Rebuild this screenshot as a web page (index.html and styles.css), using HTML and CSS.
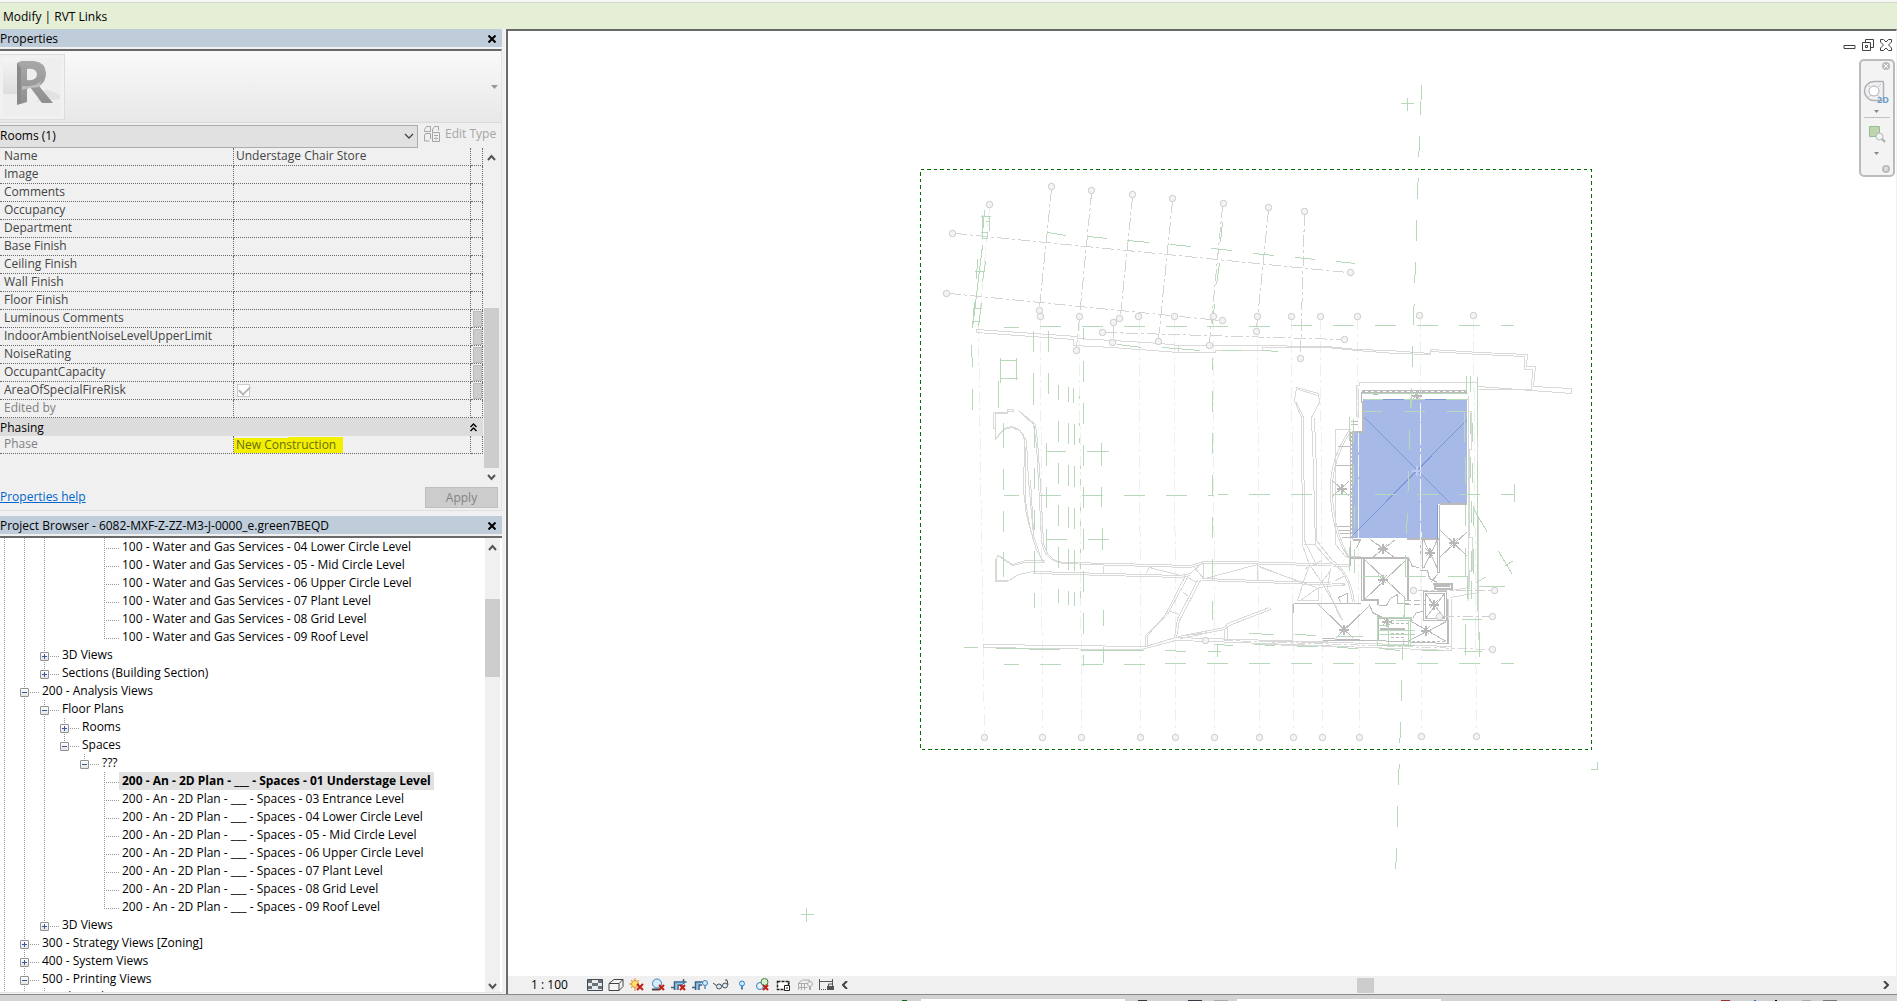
FILE: index.html
```html
<!DOCTYPE html>
<html lang="en">
<head>
    <meta charset="UTF-8">
    <meta name="viewport" content="width=device-width, initial-scale=1.0">
    <title>Modify | RVT Links</title>
    <link rel="stylesheet" href="styles.css">
</head>
<body>

<header class="options-bar">Modify | RVT Links</header>

<div class="workspace">
    <aside class="dock">
        <section class="panel properties">
            <div class="panel-title">
                <h2>Properties</h2>
                <button class="close-btn" aria-label="Close Properties">
                    <svg width="8" height="8" viewBox="0 0 8 8"><path d="M0.5 0.5l7 7M7.5 0.5l-7 7" stroke="#000" stroke-width="2"/></svg>
                </button>
            </div>
            <div class="properties-body">
                <div class="type-selector">
                    <div class="type-thumb">
                        <svg width="60" height="60" viewBox="0 0 60 60">
                            <defs>
                                <linearGradient id="rg" x1="0" y1="0" x2="0" y2="1"><stop offset="0" stop-color="#a8a8a8"/><stop offset="1" stop-color="#8e8e8e"/></linearGradient>
                                <linearGradient id="bg" x1="0" y1="0" x2="0" y2="1"><stop offset="0" stop-color="#f4f4f4"/><stop offset="1" stop-color="#dedede"/></linearGradient>
                            </defs>
                            <path d="M1 1h58v58h-58z" fill="#eee"/>
                            <path d="M1 1h18v36h-18z" fill="url(#bg)"/>
                            <path d="M34 45l24-3v-4l-14-6z" fill="#e2e2e2"/>
                            <path fill-rule="evenodd" d="M15 6l4-2h13q11 1 12 12q0 9-7 13l14 17h-11l-12-16l-3 2v13l-10 3zM25 12v11q10 1 10-6q-1-6-10-5z" fill="url(#rg)"/>
                            <path d="M15 6l4 5v35l-4 1z" fill="#8a8a8a"/>
                            <path d="M20 29q14 1 19-5l-1 6l-10 1l-8 2z" fill="#bdbdbd"/>
                        </svg>
                    </div>
                    <svg class="drop-arrow" width="7" height="4" viewBox="0 0 7 4"><path d="M0 0h7l-3.500 4z" fill="#999"/></svg>
                </div>
                <div class="filter-row">
                    <div class="filter">
                        <select aria-label="Element filter"><option>Rooms (1)</option></select>
                        <svg width="10" height="6" viewBox="0 0 10 6"><path d="M1 1l4 4l4-4" fill="none" stroke="#444" stroke-width="1.300"/></svg>
                    </div>
                    <button class="edit-type" disabled>
                        <svg width="17" height="17" viewBox="0 0 17 17" fill="none" stroke="#a5a5a5">
                            <path d="M.5 3.500l2-3h4v5h-6zM8.500 3.500l2-3h4v4M8.500 3v3M.5 9.500l1-2h5v2M.5 9v6h5M6.500 8v5"/>
                            <path d="M8.500 6.500h7v9h-7zM10 9.500h4M10 12.500h1M13 12.500h1M12 11v3"/>
                        </svg>
                        Edit Type
                    </button>
                </div>
                <div class="grid-area">
                    <table class="params">
                        <colgroup><col class="col-name"><col><col class="col-btn"></colgroup>
                        <tbody>
                            <tr><th>Name</th><td>Understage Chair Store</td><td></td></tr>
                            <tr><th>Image</th><td></td><td></td></tr>
                            <tr><th>Comments</th><td></td><td></td></tr>
                            <tr><th>Occupancy</th><td></td><td></td></tr>
                            <tr><th>Department</th><td></td><td></td></tr>
                            <tr><th>Base Finish</th><td></td><td></td></tr>
                            <tr><th>Ceiling Finish</th><td></td><td></td></tr>
                            <tr><th>Wall Finish</th><td></td><td></td></tr>
                            <tr><th>Floor Finish</th><td></td><td></td></tr>
                            <tr><th>Luminous Comments</th><td></td><td><button class="assoc" aria-label="Associate Luminous Comments"></button></td></tr>
                            <tr><th>IndoorAmbientNoiseLevelUpperLimit</th><td></td><td><button class="assoc" aria-label="Associate noise limit"></button></td></tr>
                            <tr><th>NoiseRating</th><td></td><td><button class="assoc" aria-label="Associate NoiseRating"></button></td></tr>
                            <tr><th>OccupantCapacity</th><td></td><td><button class="assoc" aria-label="Associate OccupantCapacity"></button></td></tr>
                            <tr><th><label for="fire-risk">AreaOfSpecialFireRisk</label></th><td><input type="checkbox" id="fire-risk" checked disabled></td><td><button class="assoc" aria-label="Associate AreaOfSpecialFireRisk"></button></td></tr>
                            <tr class="read-only"><th>Edited by</th><td></td><td></td></tr>
                            <tr class="group">
                                <th colspan="3">
                                    <div class="group-head">Phasing
                                        <svg width="7" height="9" viewBox="0 0 7 9"><path d="M.5 4l3-3l3 3M.5 8l3-3l3 3" fill="none" stroke="#000" stroke-width="1.400"/></svg>
                                    </div>
                                </th>
                            </tr>
                            <tr class="read-only"><th>Phase</th><td class="marked"><mark>New Construction</mark></td><td></td></tr>
                        </tbody>
                    </table>
                    <div class="scrollbar props-scroll">
                        <svg width="9" height="7" viewBox="0 0 9 7"><path d="M1 6l3.500-4l3.500 4" fill="none" stroke="#555" stroke-width="2"/></svg>
                        <div class="thumb"></div>
                        <svg width="9" height="7" viewBox="0 0 9 7"><path d="M1 1l3.500 4l3.500-4" fill="none" stroke="#555" stroke-width="2"/></svg>
                    </div>
                </div>
                <div class="panel-footer">
                    <a href="#">Properties help</a>
                    <button class="apply-btn" disabled>Apply</button>
                </div>
            </div>
        </section>

        <section class="panel browser">
            <div class="panel-title">
                <h2>Project Browser - 6082-MXF-Z-ZZ-M3-J-0000_e.green7BEQD</h2>
                <button class="close-btn" aria-label="Close Project Browser">
                    <svg width="8" height="8" viewBox="0 0 8 8"><path d="M0.5 0.5l7 7M7.5 0.5l-7 7" stroke="#000" stroke-width="2"/></svg>
                </button>
            </div>
            <div class="browser-body">
                <ul class="tree">
                    <li>
                        <ul>
                            <li>
                                <ul>
                                    <li>
                                        <ul>
                                            <li class="bare">
                                                <ul>
                                                    <li class="bare">
                                                        <ul>
                                                            <li class="leaf"><span>100 - Water and Gas Services - 04 Lower Circle Level</span></li>
                                                            <li class="leaf"><span>100 - Water and Gas Services - 05 - Mid Circle Level</span></li>
                                                            <li class="leaf"><span>100 - Water and Gas Services - 06 Upper Circle Level</span></li>
                                                            <li class="leaf"><span>100 - Water and Gas Services - 07 Plant Level</span></li>
                                                            <li class="leaf"><span>100 - Water and Gas Services - 08 Grid Level</span></li>
                                                            <li class="leaf last"><span>100 - Water and Gas Services - 09 Roof Level</span></li>
                                                        </ul>
                                                    </li>
                                                </ul>
                                            </li>
                                        </ul>
                                    </li>
                                    <li><div class="node"><button class="plus" aria-label="Expand"></button><span>3D Views</span></div></li>
                                    <li class="last"><div class="node"><button class="plus" aria-label="Expand"></button><span>Sections (Building Section)</span></div></li>
                                </ul>
                            </li>
                            <li>
                                <div class="node"><button class="minus" aria-label="Collapse"></button><span>200 - Analysis Views</span></div>
                                <ul>
                                    <li>
                                        <div class="node"><button class="minus" aria-label="Collapse"></button><span>Floor Plans</span></div>
                                        <ul>
                                            <li><div class="node"><button class="plus" aria-label="Expand"></button><span>Rooms</span></div></li>
                                            <li class="last">
                                                <div class="node"><button class="minus" aria-label="Collapse"></button><span>Spaces</span></div>
                                                <ul>
                                                    <li class="last">
                                                        <div class="node"><button class="minus" aria-label="Collapse"></button><span>???</span></div>
                                                        <ul>
                                                            <li class="leaf active"><span>200 - An - 2D Plan - ___ - Spaces - 01 Understage Level</span></li>
                                                            <li class="leaf"><span>200 - An - 2D Plan - ___ - Spaces - 03 Entrance Level</span></li>
                                                            <li class="leaf"><span>200 - An - 2D Plan - ___ - Spaces - 04 Lower Circle Level</span></li>
                                                            <li class="leaf"><span>200 - An - 2D Plan - ___ - Spaces - 05 - Mid Circle Level</span></li>
                                                            <li class="leaf"><span>200 - An - 2D Plan - ___ - Spaces - 06 Upper Circle Level</span></li>
                                                            <li class="leaf"><span>200 - An - 2D Plan - ___ - Spaces - 07 Plant Level</span></li>
                                                            <li class="leaf"><span>200 - An - 2D Plan - ___ - Spaces - 08 Grid Level</span></li>
                                                            <li class="leaf last"><span>200 - An - 2D Plan - ___ - Spaces - 09 Roof Level</span></li>
                                                        </ul>
                                                    </li>
                                                </ul>
                                            </li>
                                        </ul>
                                    </li>
                                    <li class="last"><div class="node"><button class="plus" aria-label="Expand"></button><span>3D Views</span></div></li>
                                </ul>
                            </li>
                            <li><div class="node"><button class="plus" aria-label="Expand"></button><span>300 - Strategy Views [Zoning]</span></div></li>
                            <li><div class="node"><button class="plus" aria-label="Expand"></button><span>400 - System Views</span></div></li>
                            <li>
                                <div class="node"><button class="minus" aria-label="Collapse"></button><span>500 - Printing Views</span></div>
                                <ul>
                                    <li><div class="node"><button class="minus" aria-label="Collapse"></button><span>Floor Plans</span></div></li>
                                </ul>
                            </li>
                        </ul>
                    </li>
                </ul>
                <div class="scrollbar tree-scroll">
                    <svg width="9" height="7" viewBox="0 0 9 7"><path d="M1 6l3.500-4l3.500 4" fill="none" stroke="#555" stroke-width="2"/></svg>
                    <div class="thumb"></div>
                    <svg width="9" height="7" viewBox="0 0 9 7"><path d="M1 1l3.500 4l3.500-4" fill="none" stroke="#555" stroke-width="2"/></svg>
                </div>
            </div>
        </section>
    </aside>

    <main class="view">
        <div class="canvas">
            <svg class="plan" viewBox="508 31 1388 945" preserveAspectRatio="xMinYMin slice">
                <defs>
                    <g id="b"><circle r="3.200" fill="#f4f4f4" stroke="#cbcbcb" shape-rendering="auto"/></g>
                    <g id="s"><path d="M-4-4l8 8M4-4l-8 8" stroke="#bbb"/><path d="M-5 0h10M0-5v10" stroke="#b8b8b8" stroke-width="2"/></g>
                </defs>
                <path d="M1363 399H1467V504H1438V538H1352V431H1363Z" fill="#a7b9e7" shape-rendering="crispEdges"/>
                <g transform="translate(.5 .5)" fill="none" shape-rendering="crispEdges">

                    <!-- long vertical grids -->
                    <g stroke="#efefef" stroke-dasharray="12 4 3 4">
                        <path d="M989 208L978 330L984 735M1040 318L1042 735M1079 318L1081 735M1139 318L1140 735M1174 318L1175 735M1213 318L1214 735M1257 318L1259 735M1291 318L1293 735M1320 318L1322 735M1357 318L1359 735M1420 318L1421 735M1473 318L1476 735"/>
                    </g>

                    <!-- survey grid -->
                    <g stroke="#d3d3d3" stroke-dasharray="12 3 3 3">
                        <path d="M955 233L1347 272M949 293L1219 320M1105 332L1341 339"/>
                        <path d="M1051 189L1039 307M1091 193L1076 347M1132 197L1120 315M1172 201L1158 338M1222 206L1209 342M1268 210L1256 328M1304 214L1300 355M1113 325V339"/>
                    </g>

                    <!-- boundary walls -->
                    <g stroke="#d9d9d9">
                        <path d="M976 332V329L1077 336V338L1112 340L1160 343L1178 345H1245L1327 346L1356 349L1389 350L1430 353V349L1480 352L1527 354L1526 366H1535L1533 386L1571 388V393L1478 386"/>
                        <path d="M976 332L1073 339V345L1112 347L1178 352H1215V350H1262V347L1327 347L1356 350L1395 353L1430 354V351L1480 354L1524 356V369H1532L1531 389L1478 389M1178 345V352"/>
                        <path d="M1007 412H993V428H995V439L1003 429L1011 427L1019 430L1026 440L1028 480L1033 535L1042 562"/>
                        <path d="M1007 413H995V430M1007 412V409H1013V411H1007M997 435Q1011 418 1023 434L1025 450V500L1029 525L1036 550L1044 562M1024 445L1023 490L1026 515L1033 540M1030 480L1033 530"/>
                        <path d="M1018 410L1035 424L1037 440L1041 500L1043 543Q1048 562 1065 562L1116 563L1190 565L1203 561H1240L1350 564"/>
                        <path d="M1020 412L1033 424L1036 445L1039 500L1041 540Q1044 562 1065 563L1116 565L1190 567L1203 563H1240L1350 566"/>
                        <path d="M995 558L998 555L1012 564L1025 560H1044M995 558V581H1007L1018 574L1033 571L1180 575L1190 573L1203 561M996 557V580H1007M1033 573L1180 577L1190 575M997 555L1012 565L1025 562H1044"/>
                        <path d="M1103 565V573M1149 566L1146 573M1149 567L1180 575M1203 563V578M1205 578L1257 564V580M1257 565L1300 582M1202 578L1345 583M1202 580L1345 585M1194 567L1203 578M1184 575L1196 582"/>
                        <path d="M1187 577L1167 614L1145 635V646M1184 577L1165 614L1147 635V646M1200 580L1179 620L1176 637M1197 580L1177 618L1174 637M1183 592L1188 596M1170 611L1179 614"/>
                        <path d="M983 644V647L1110 649H1141L1175 640L1210 641L1345 646M983 644L1145 646L1175 637L1205 638L1345 642"/>
                        <path d="M1178 636L1224 627L1227 623L1269 607M1180 638L1224 629L1229 625L1270 609V607M1227 625V640M1224 628V640M1185 635L1208 632"/>
                        <path d="M1296 387L1318 393L1319 402L1311 417L1313 470L1315 545L1330 562Q1348 570 1352 602M1296 387L1294 400L1301 417L1302 545L1309 564L1320 580L1335 605L1342 620"/>
                        <path d="M1298 389L1317 395M1296 402L1303 417L1304 540L1316 565M1314 418L1316 470V540L1332 560Q1350 572 1354 602M1303 544H1315M1309 565L1304 578L1297 600H1318V587L1346 584M1318 587L1300 600M1318 587V600M1318 586L1330 570"/>
                        <path d="M1330 568L1327 588L1340 618M1322 560L1305 568M1316 587L1260 567M1335 580L1345 575"/>
                        <path d="M1350 429H1335V544L1345 556H1360M1348 431Q1329 460 1330 490Q1330 530 1348 558M1350 431Q1331 462 1332 490Q1332 528 1350 560"/>
                        <path d="M1356 416V385H1359V382H1477V385M1358 417V388M1467 411H1471V449H1469V537H1472V570H1469V588M1477 385L1478 640M1468 395V600"/>
                        <path d="M1292 602V643M1260 641L1340 642L1450 646H1451V598M1260 644L1340 646L1451 650V646M1448 598V643M1450 597L1478 592M1450 590L1469 587"/>
                        <path d="M1224 640L1489 649" stroke-dasharray="9 3 3 3"/>
                    </g>

                    <!-- building walls and rooms -->
                    <g stroke="#bbb">
                        <path d="M1361 391H1466" stroke-width="3"/>
                        <path d="M1364 391H1466" stroke="#fff" stroke-dasharray="3 3"/>
                        <path d="M1361 391V402M1372 394H1377M1350 421H1357M1350 424H1357M1350 431V538M1352 431V538" />
                        <path d="M1351 431V538" stroke-dasharray="2 2"/>
                        <path d="M1362 400V431H1352M1439 503H1466M1352 539H1360M1406 538H1438" stroke-width="2"/>
                        <path d="M1437 504V572H1439V504M1420 539V570H1427M1422 539V568"/>
                        <path d="M1350 557H1407M1363 558V599H1377V604M1407 557V600" stroke-width="2"/>
                        <path d="M1350 557H1407M1361 558V600H1376"/>
                        <path d="M1364 559L1406 599M1406 559L1364 599M1370 539L1394 557M1395 539L1372 557M1423 539L1437 568M1437 539L1423 568M1440 530L1467 556M1467 531L1440 556"/>
                        <path d="M1423 591H1446V620H1423ZM1425 593H1444V618H1425ZM1425 593L1444 618M1444 593L1425 618M1424 620H1448V643M1409 620L1446 641M1446 621L1407 641M1447 598V643"/>
                        <path d="M1432 583H1451V588H1434V585H1449" stroke-width="2"/>
                        <path d="M1377 617H1410V620M1377 614V640M1379 628H1404" stroke-width="2"/>
                        <path d="M1318 604L1353 638M1369 605L1335 638M1293 603H1360M1322 638L1448 643M1322 640H1377M1293 603V612M1369 604L1372 612L1382 617"/>
                        <path d="M1337 446H1350M1334 465H1350M1332 480L1349 496M1349 480L1332 496M1337 526H1350M1338 530H1350M1339 533H1350M1341 537H1350M1350 540V565"/>
                        <path d="M1360 539L1356 548M1408 557L1412 566L1419 567M1427 570L1429 578L1437 582M1430 582L1437 574M1378 605H1386L1390 598L1397 594V603H1408M1424 611L1416 612L1412 618M1347 593V602M1340 602L1338 597L1347 593" />
                        <path d="M1390 620H1410M1390 623H1410M1390 633H1404M1390 637H1404M1386 641H1447" stroke-dasharray="3 2"/>
                        <path d="M1404 600H1424M1404 604H1424" stroke-dasharray="6 3"/>
                    </g>
                    <path d="M1364 417L1450 503M1466 420L1353 534M1382 399H1403M1424 399H1445M1437 504V538" stroke="#7d97d8"/>
                    <path d="M1411 470H1421M1416 465V475" stroke="#bccaf0" stroke-width="2"/>
                    <path d="M1420 403V595M1358 435V538" stroke="#f3f3f3" stroke-dasharray="16 3 3 3"/>
                    <use href="#s" x="1416" y="395"/><use href="#s" x="1341" y="488"/><use href="#s" x="1382" y="548"/><use href="#s" x="1429" y="552"/>
                    <use href="#s" x="1453" y="542"/><use href="#s" x="1382" y="579"/><use href="#s" x="1433" y="604"/><use href="#s" x="1425" y="630"/>
                    <use href="#s" x="1343" y="629"/><use href="#s" x="1386" y="621"/>

                    <g stroke="#cfcfcf" stroke-dasharray="10 3 3 3"><path d="M1417 590H1491M1443 616H1489"/></g>

                    <!-- reference planes -->
                    <g stroke="#b7d9b9">
                        <path d="M1419 136L1395 877" stroke-dasharray="21 20.860"/>
                        <path d="M1421 84V99M1420 100V114M1400 103H1413M1407 97V110M800 914H813M806 907V921M1590 769H1597V761"/>
                        <path d="M1003 327H1018M1003 495H1018M1003 664H1018M1039 326H1213M1039 495H1213M1039 664H1144" stroke-dasharray="21 21"/>
                        <path d="M1217 494H1227M1248 494H1513M1164 663H1513M1206 326H1269M1290 325H1513" stroke-dasharray="21 21"/>
                        <path d="M1514 483V501M1045 451H1065M1086 451H1108M1045 539H1066M1087 539H1108M963 647H977M1000 357V382M1016 357V379M999 360H1016M1000 378H1017"/>
                        <path d="M1033 330V351M1048 330V351M1033 372V404M1048 372V393M998 380V407M971 345L972 367M972 388V409M1003 422V447M1003 468V489M1003 510V531M1003 551V576"/>
                        <path d="M1034 425V447M1034 467V488M1034 509V529M1034 550V573M1034 592V607M1046 442V465M1046 486V507M1046 528V550M1101 442V465M1101 486V506M1102 527V549M1103 609V625M1103 646V662"/>
                        <path d="M1083 327V665M1212 357V619" stroke-dasharray="21 21" stroke-dashoffset="9"/>
                        <path d="M1058 384V399M1058 420V602M1068 386V401M1068 422V604M1073 387V402M1074 423V605" stroke-dasharray="21 21"/>
                        <path d="M1079 395V398M1079 422V425M1079 437V442M1080 465V468M1080 478V484M1080 506V510M1080 520V525M1080 548V552M1080 562V568M1080 590V597"/>
                        <path d="M984 210L982 234M989 216V230M982 245L972 328M980 216H990M985 221H989M982 214V238H987V232H980M977 259L976 279M985 261L982 281M974 271H984M974 302L972 328M981 303L978 326M972 308H981M971 321H979"/>
                        <path d="M1047 232L1066 235M1088 236L1107 238M1127 240L1149 242M1170 244L1191 246M1211 248L1232 250M1253 253L1274 255M1295 257L1315 259M1336 261L1355 263M1222 222L1220 242M1219 263L1216 284M1214 304L1212 324M1117 344L1141 347M1162 347L1200 350M1221 350H1241M1262 350L1278 351"/>
                        <path d="M996 648L1060 649M1080 650H1143M1165 650L1186 651M1207 651H1220M1217 643V656M1215 644L1233 645M1249 633L1274 634M1254 644L1275 645M1296 646H1317M1295 634L1316 635M1337 636H1362M1337 647L1358 648M1379 648L1400 650M1421 650H1442"/>
                        <path d="M1363 399H1382M1403 399H1424M1445 399H1467M1361 393H1467M1362 411H1381M1403 411H1424M1445 411H1466M1411 387V406M1362 576H1383M1404 576H1425M1447 576H1467"/>
                        <path d="M1349 416V440M1353 418V442M1353 464V484M1354 505V526M1349 546V570M1354 548V572"/>
                        <path d="M1466 375V391M1470 375V391M1477 376V435M1464 412V441M1470 412V433M1472 422V441M1465 456V483M1470 456V477M1472 462V482M1465 504V525M1471 500V522M1473 505V525M1465 547V575M1471 550V571M1477 460V610M1467 575V598M1471 580V598M1473 548V573"/>
                        <path d="M1473 508L1487 532M1498 551L1512 574M1505 565L1513 560M1476 582L1486 576M1478 586H1504M1461 619H1481M1465 623V654M1479 631V656M1463 651H1481"/>
                        <path d="M1377 617H1410V645H1377ZM1388 618V645M1378 625H1388V617M1377 630H1414M1396 620H1412M1377 634H1414M1404 595V616M1402 645V658M1408 620V646M1378 645H1414"/>
                    </g>

                    <!-- grid heads -->
                    <g>
                        <use href="#b" x="989" y="204"/><use href="#b" x="1051" y="186"/><use href="#b" x="1091" y="190"/><use href="#b" x="1132" y="194"/><use href="#b" x="1172" y="198"/><use href="#b" x="1223" y="203"/><use href="#b" x="1268" y="207"/><use href="#b" x="1304" y="211"/>
                        <use href="#b" x="952" y="233"/><use href="#b" x="946" y="293"/><use href="#b" x="1350" y="272"/><use href="#b" x="1222" y="320"/><use href="#b" x="1102" y="332"/><use href="#b" x="1344" y="339"/>
                        <use href="#b" x="1039" y="310"/><use href="#b" x="1076" y="350"/><use href="#b" x="1119" y="318"/><use href="#b" x="1113" y="322"/><use href="#b" x="1112" y="342"/><use href="#b" x="1158" y="341"/><use href="#b" x="1209" y="345"/><use href="#b" x="1256" y="331"/><use href="#b" x="1300" y="358"/>
                        <use href="#b" x="1040" y="316"/><use href="#b" x="1079" y="316"/><use href="#b" x="1138" y="316"/><use href="#b" x="1174" y="316"/><use href="#b" x="1213" y="316"/><use href="#b" x="1257" y="316"/><use href="#b" x="1291" y="316"/><use href="#b" x="1320" y="316"/><use href="#b" x="1357" y="316"/><use href="#b" x="1419" y="315"/><use href="#b" x="1473" y="315"/>
                        <use href="#b" x="984" y="737"/><use href="#b" x="1042" y="737"/><use href="#b" x="1081" y="737"/><use href="#b" x="1140" y="737"/><use href="#b" x="1175" y="737"/><use href="#b" x="1214" y="737"/><use href="#b" x="1259" y="737"/><use href="#b" x="1293" y="737"/><use href="#b" x="1322" y="737"/><use href="#b" x="1359" y="737"/><use href="#b" x="1421" y="736"/><use href="#b" x="1476" y="736"/>
                        <use href="#b" x="1413" y="590"/><use href="#b" x="1494" y="590"/><use href="#b" x="1439" y="616"/><use href="#b" x="1492" y="616"/><use href="#b" x="1492" y="649"/><use href="#b" x="1205" y="640"/>
                    </g>

                    <!-- selected link extents -->
                    <path d="M920 169H1591V749H920Z" stroke="#007000" stroke-dasharray="3.500 3"/>
                </g>
            </svg>
            <div class="view-tools">
                <div class="window-btns">
                    <button aria-label="Minimize"><svg width="13" height="12" viewBox="0 0 13 12"><path d="M1 6.500h11v3h-11z" fill="#fff" stroke="#444"/></svg></button>
                    <button aria-label="Restore"><svg width="12" height="12" viewBox="0 0 12 12" fill="#fff" stroke="#444"><path d="M3.500 .5h8v8h-8z"/><path d="M.5 3.500h8v8h-8z"/><path d="M3.500 6.500h2v2h-2z"/></svg></button>
                    <button aria-label="Close"><svg width="12" height="12" viewBox="0 0 12 12"><path d="M.5 .5h3l2.500 2.500l2.500-2.500h3v2.500l-3 3l3 3v2.500h-3l-2.500-2.500l-2.500 2.500h-3v-2.500l3-3l-3-3z" fill="#fff" stroke="#444"/></svg></button>
                </div>
                <nav class="nav-bar">
                    <svg width="32" height="114" viewBox="0 0 32 114">
                        <circle cx="25" cy="5" r="4" fill="#bbb"/><path d="M23 3l4 4M27 3l-4 4" stroke="#fff"/>
                        <path d="M22 20.500H13A9 9 0 0 0 13 39.500H22.500V22z" fill="#f0f1f4" stroke="#b0b0b5" stroke-width="1.500"/>
                        <circle cx="13" cy="30" r="5" fill="#fff" stroke="#b0b0b5"/><path d="M6 37l4-3M20 37l-4-3M6 23l3 3M20 23l-3 3" stroke="#c5c5c8"/>
                        <text x="16" y="42" class="nav-2d">2D</text>
                        <path d="M13 49h5l-2.500 3zM13 91h5l-2.500 3z" fill="#888"/>
                        <path d="M3 56.500h26" stroke="#c0c0c0"/>
                        <path d="M8.500 65.500h10v10h-10z" fill="#bed5af" stroke="#90c090"/>
                        <circle cx="18.500" cy="75.500" r="3.500" fill="#f2f4f6" stroke="#b2b6ba"/><path d="M21 78l3 3" stroke="#aaa" stroke-width="2"/>
                        <circle cx="25" cy="108" r="4" fill="#bbb"/><path d="M23 107h4M23.500 109h3" stroke="#fff"/>
                    </svg>
                </nav>
            </div>
        </div>

        <div class="view-bar">
            <button class="scale">1 : 100</button>
            <div class="view-icons">
                <svg viewBox="0 0 16 14"><path d="M.5 1.500h15v11h-15z" fill="#e8eaec" stroke="#444b52"/><path d="M1 2h4v3h-4zM11 2h4v3h-4zM5 5h6v3h-6zM1 8h4v3h-4zM11 8h4v3h-4z" fill="#68727a"/></svg>
                <svg viewBox="0 0 16 14"><path d="M1 5.500l5-4h9l-4 4v7h-10zM1 5.500h10M15 1.500v7l-4 4" fill="#f5f5f5" stroke="#444"/></svg>
                <svg viewBox="0 0 16 14"><circle cx="6" cy="6" r="3.500" fill="#ffe27a" stroke="#e09020"/><path d="M6 0v2M6 10v3M0 6h2M2 2l1 1M10 2l-1 1M2 10l1-1" stroke="#e09020"/><path d="M8 6l6 6M14 6l-6 6" stroke="#c02018" stroke-width="2"/></svg>
                <svg viewBox="0 0 16 14"><circle cx="7" cy="5.500" r="4.500" fill="#d6ecfa" stroke="#3a7fc0"/><path d="M2 11.500h7" stroke="#444" stroke-width="2"/><path d="M9 7l5 5M14 7l-5 5" stroke="#c02018" stroke-width="2"/></svg>
                <svg viewBox="0 0 16 14"><path d="M0 9.500h4M3.500 12v-8h12M7 12v-5h5M12.500 1v5" fill="none" stroke="#3d5f80" stroke-width="1.500"/><path d="M5 12v-7h9" fill="none" stroke="#3a9ae0"/><path d="M9 7l5 5M14 7l-5 5" stroke="#c02018" stroke-width="2"/></svg>
                <svg viewBox="0 0 16 14"><path d="M0 9.500h4M3.500 12v-8h7M7 12v-5h3" fill="none" stroke="#3d5f80" stroke-width="1.500"/><path d="M5 12v-7h4" fill="none" stroke="#3a9ae0"/><circle cx="13" cy="5" r="2.500" fill="#d6ecfa" stroke="#3a7fc0"/><path d="M12 8h2v3h-2z" fill="#7da5c5"/></svg>
                <svg viewBox="0 0 16 14"><path d="M0 5l4 3M6 7l4 1M12 2h2l1 5" stroke="#444" fill="none"/><circle cx="6" cy="8.500" r="2.500" fill="#dcebf2" stroke="#4a5258"/><circle cx="12" cy="7.500" r="2.500" fill="#dcebf2" stroke="#4a5258"/></svg>
                <svg viewBox="0 0 16 14"><circle cx="8" cy="5.500" r="2.500" fill="#cfeaff" stroke="#2585d0"/><path d="M7 8h2v3.500h-2z" fill="#4b7eaa"/></svg>
                <svg viewBox="0 0 16 14"><circle cx="5" cy="8" r="3.500" fill="#e6f3fa" stroke="#3a7fc0"/><circle cx="9.500" cy="4" r="3.500" fill="#d9efd0" stroke="#388040"/><path d="M8 7l5 5M13 7l-5 5" stroke="#c02018" stroke-width="2"/></svg>
                <svg viewBox="0 0 16 14"><path d="M1.500 3.500h11v8h-11z" fill="#fff" stroke="#222" stroke-width="1.500" stroke-dasharray="3 1"/><path d="M8.500 7.500h5v5h-5z" fill="#fff" stroke="#222"/><path d="M13 3v3M10 10h2" stroke="#222"/></svg>
                <svg viewBox="0 0 16 14"><path d="M1.500 5.500h9M1.500 9.500h9M1.500 5v7M4.500 5v7M7.500 5v7M1.500 5l4-3h7v3" fill="none" stroke="#aaa"/><circle cx="13" cy="6" r="2.500" fill="#eee" stroke="#aaa"/><path d="M13 9v3" stroke="#aaa" stroke-width="2"/></svg>
                <svg viewBox="0 0 16 14"><path d="M1.500 1v11M14.500 1v5M1.500 3.500h13" fill="none" stroke="#555"/><path d="M3 11.500h5" stroke="#555" stroke-dasharray="1 1"/><path d="M9 8h7v4h-7z" fill="#555"/><path d="M10.500 8v-2h4v2" fill="none" stroke="#555"/></svg>
            </div>
            <div class="h-scroll">
                <svg width="6" height="8" viewBox="0 0 6 8"><path d="M5 0l-4 4l4 4" fill="none" stroke="#444" stroke-width="2"/></svg>
                <div class="h-thumb"></div>
                <svg width="6" height="8" viewBox="0 0 6 8"><path d="M1 0l4 4l-4 4" fill="none" stroke="#444" stroke-width="2"/></svg>
            </div>
        </div>
    </main>
</div>

<footer class="status-bar">
    <i class="bit green"></i>
    <i class="field"></i>
    <i class="bit dark"></i>
    <i class="bit dark wide"></i>
    <i class="bit grey wide"></i>
    <i class="field second"></i>
    <i class="bit red"></i>
    <i class="bit blue"></i>
    <i class="bit black"></i>
    <i class="bit grey"></i>
    <i class="bit slate wide"></i>
</footer>

</body>
</html>
```

FILE: styles.css
```css
* {
    box-sizing: border-box;
}
body {
    margin: 0;
    height: 100vh;
    display: flex;
    flex-direction: column;
    overflow: hidden;
    background-color: #f0f0f0;
    font-family: "Open Sans", "Noto Sans", sans-serif;
    font-size: 12px;
    line-height: 18px;
    color: #000;
}
button, select, input {
    font: inherit;
    margin: 0;
}
button {
    padding: 0;
    border: none;
    background: none;
}
svg {
    display: block;
    flex: none;
}
.options-bar {
    height: 29px;
    flex: none;
    padding: 6px 3px 0;
    border-top: 2px solid #f7f7f4;
    box-shadow: inset 0 1px 0 #d6d8d2;
    background-color: #e4efd6;
}
.workspace {
    flex: 1;
    min-height: 0;
    display: flex;
}

/* docked panels */
.dock {
    width: 506px;
    flex: none;
    display: flex;
    flex-direction: column;
    padding-right: 3px;
    border-right: 1px solid #f8f8f8;
}
.panel {
    display: flex;
    flex-direction: column;
}
.panel-title {
    height: 18px;
    margin-bottom: 2px;
    flex: none;
    display: flex;
    justify-content: space-between;
    align-items: center;
    padding: 2px 6px 0 0;
    background-color: #bfcddb;
}
.panel-title h2 {
    margin: 0;
    font-size: 12px;
    font-weight: normal;
    white-space: nowrap;
}
.properties-body {
    display: flex;
    flex-direction: column;
    border-top: 2px solid #696969;
    border-right: 1px solid #e3e3e3;
    border-bottom: 1px solid #e0e0e0;
    margin-bottom: 5px;
}
.type-selector {
    height: 72px;
    display: flex;
    justify-content: space-between;
    align-items: center;
    padding-right: 3px;
    background: linear-gradient(#f9f9f9, #e8e8e8);
    border-bottom: 1px solid #d9d9d9;
}
.type-thumb {
    padding: 2px;
    border: 1px solid #ddd;
    border-left: none;
    background-color: #f1f1f1;
}
.filter-row {
    height: 25px;
    display: flex;
    padding-top: 1px;
    gap: 6px;
}
.filter {
    width: 418px;
    display: grid;
    align-items: center;
}
.filter select, .filter svg {
    grid-area: 1 / 1;
}
.filter select {
    appearance: none;
    width: 100%;
    height: 23px;
    padding: 0;
    border: 1px solid #adadad;
    border-left: none;
    border-radius: 0;
    background-color: #e1e1e1;
    color: #000;
}
.filter svg {
    justify-self: end;
    margin-right: 4px;
    pointer-events: none;
}
.edit-type {
    display: flex;
    align-items: center;
    gap: 4px;
    height: 20px;
    color: #a5a5a5;
    white-space: nowrap;
}
.grid-area {
    display: flex;
    height: 337px;
    align-items: flex-start;
    padding-right: 2px;
}
.params {
    flex: 1;
    table-layout: fixed;
    width: 100%;
    border-collapse: separate;
    border-spacing: 0;
    color: #444;
}
.col-name {
    width: 234px;
}
.col-btn {
    width: 12px;
}
.params th, .params td {
    height: 18px;
    padding: 0 0 2px 2px;
    line-height: 15px;
    font-weight: normal;
    text-align: left;
    white-space: nowrap;
    border-right: 1px dotted #6a6a6a;
    border-bottom: 1px dotted #6a6a6a;
}
.params th {
    padding-left: 4px;
}
.params td:last-child {
    padding-bottom: 0;
}
.params .read-only {
    color: #808080;
}
.params .group th {
    padding: 0;
    border: none;
    background-color: #dcdcdc;
    color: #000;
}
.group-head {
    display: flex;
    justify-content: space-between;
    align-items: center;
    padding-right: 6px;
}
.params .marked {
    padding: 0;
}
.params mark {
    display: block;
    width: 109px;
    padding-left: 2px;
    line-height: 17px;
    color: #6b6b10;
    background-color: #f2f000;
    clip-path: polygon(0 2px, 50% 2px, 50% 1px, 100% 1px, 100% 100%, 0 100%);
}
.params input {
    appearance: none;
    display: block;
    width: 13px;
    height: 13px;
    margin: 2px 0 0 1px;
    border: 1px solid #ccc;
    background-color: #fff;
}
.params input::before {
    content: "";
    display: block;
    width: 9px;
    height: 5px;
    margin: 1px;
    border: solid #b5b5b5;
    border-width: 0 0 2px 2px;
    transform: rotate(-45deg);
}
.assoc {
    display: block;
    width: 9px;
    height: 16px;
    background-color: #ccc;
    border: 1px solid #bcbcbc;
}
.scrollbar {
    width: 15px;
    flex: none;
    align-self: stretch;
    display: flex;
    flex-direction: column;
    align-items: center;
    padding: 6px 0;
    background-color: #f0f0f0;
}
.scrollbar .thumb {
    width: 100%;
    background-color: #cdcdcd;
}
.props-scroll {
    margin-left: 1px;
    padding-bottom: 4px;
}
.props-scroll .thumb {
    height: 160px;
    margin: auto 0 6px;
}
.tree-scroll {
    padding-bottom: 2px;
}
.tree-scroll .thumb {
    height: 78px;
    margin: 48px 0 auto;
}
.panel-footer {
    display: flex;
    justify-content: space-between;
    align-items: center;
    height: 25px;
    padding-right: 3px;
}
.panel-footer a {
    padding-bottom: 2px;
    color: #0066cc;
}
.apply-btn {
    width: 73px;
    height: 21px;
    padding-top: 1px;
    color: #838383;
    background-color: #ccc;
    border: 1px solid #bfbfbf;
}

/* project browser */
.browser {
    flex: 1;
    min-height: 0;
}
.browser-body {
    flex: 1;
    min-height: 0;
    display: flex;
    overflow: hidden;
    background-color: #fff;
    border-top: 2px solid #696969;
    border-bottom: 1px solid #e3e3e3;
    margin-bottom: 1px;
    padding-right: 2px;
}
.tree {
    flex: 1;
}
.tree, .tree ul {
    list-style: none;
    margin: 0;
    padding: 0;
}
.tree ul {
    padding-left: 20px;
}
.tree li {
    background: repeating-linear-gradient(#999 0 1px, transparent 1px 2px) 4px 0 / 1px 100% no-repeat;
}
.tree li.last {
    background-size: 1px 10px;
}
.tree li.bare {
    background: none;
}
.node, .leaf {
    height: 18px;
    display: flex;
    white-space: nowrap;
}
.node {
    background: repeating-linear-gradient(90deg, #999 0 1px, transparent 1px 2px) 10px 10px / 10px 1px no-repeat;
}
.node button {
    width: 9px;
    height: 9px;
    margin-top: 6px;
    margin-right: 13px;
    border: 1px solid #919191;
    border-radius: 1px;
}
.node .minus {
    background: linear-gradient(#3a56a0, #3a56a0) center / 5px 1px no-repeat, linear-gradient(#fff, #e4e4e4);
}
.node .plus {
    background: linear-gradient(#3a56a0, #3a56a0) center / 5px 1px no-repeat, linear-gradient(#3a56a0, #3a56a0) center / 1px 5px no-repeat, linear-gradient(#fff, #e4e4e4);
}
.leaf::before {
    content: "";
    width: 15px;
    height: 1px;
    margin: 10px 0 0 4px;
    background: repeating-linear-gradient(90deg, #999 0 1px, transparent 1px 2px);
}
.leaf span {
    padding: 0 3px;
}
.leaf.active span {
    font-weight: bold;
    background-color: #e1e1e1;
}

/* drawing view */
.view {
    flex: 1;
    min-width: 0;
    display: flex;
    flex-direction: column;
    border-left: 2px solid #696969;
    border-top: 2px solid #696969;
    border-right: 1px solid #f0f0f0;
}
.canvas {
    flex: 1;
    min-height: 0;
    display: grid;
    background-color: #fff;
}
.plan, .view-tools {
    grid-area: 1 / 1;
}
.plan {
    width: 100%;
    height: 100%;
    min-height: 0;
}
.view-tools {
    justify-self: end;
    display: flex;
    flex-direction: column;
    align-items: flex-end;
    gap: 8px;
    padding: 8px 1px 0 0;
}
.window-btns {
    display: flex;
    gap: 6px;
    padding-right: 3px;
}
.nav-bar {
    border: 2px solid #bbb;
    border-radius: 5px;
    background-color: #f3f3f3;
}
.nav-2d {
    font: bold 9px "Open Sans", sans-serif;
    fill: #6f9cc8;
}
.view-bar {
    height: 18px;
    flex: none;
    display: flex;
    align-items: center;
    background-color: #f0f0f0;
}
.scale {
    width: 79px;
    padding-left: 4px;
    text-align: center;
}
.view-icons {
    display: flex;
    gap: 5px;
}
.view-icons svg {
    width: 16px;
    height: 14px;
}
.h-scroll {
    flex: 1;
    display: flex;
    align-items: center;
    justify-content: space-between;
    padding: 0 7px 0 8px;
}
.h-thumb {
    width: 17px;
    height: 15px;
    background-color: #cdcdcd;
}
.status-bar {
    height: 7px;
    flex: none;
    display: flex;
    align-items: flex-end;
    border-top: 1px solid #8a8a8a;
    background-color: #d3d3d3;
}
.field {
    width: 204px;
    height: 2px;
    background-color: #fff;
}
.bit {
    width: 9px;
    height: 1px;
}
.wide { width: 14px; }
.green { width: 5px; margin: 0 14px 0 902px; background-color: #107010; }
.dark { margin: 0 0 0 13px; background-color: #333a44; }
.dark.wide { margin-left: 41px; }
.grey { background-color: #aaa; margin-left: 12px; }
.second { margin-left: 9px; }
.red { background-color: #a03028; margin-left: auto; }
.blue { width: 2px; margin-left: 24px; background-color: #2a70c0; }
.black { width: 2px; margin: 0 13px 0 19px; background-color: #000; }
.slate { background-color: #777; margin: 0 60px 0 12px; }
```
